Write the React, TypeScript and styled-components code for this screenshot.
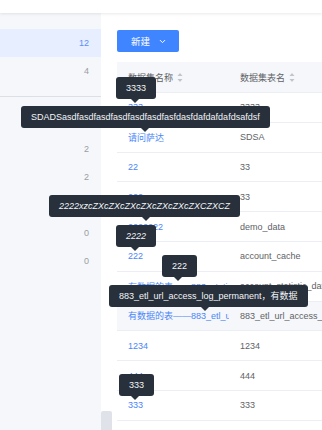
import React from "react";
import styled, { createGlobalStyle } from "styled-components";
import { ChevronDown } from "lucide-react";

const GlobalStyle = createGlobalStyle`
  html, body { margin: 0; padding: 0; background: #fff; }
  body {
    width: 322px;
    height: 430px;
    overflow: hidden;
    font-family: "Liberation Sans", "Noto Sans CJK SC", sans-serif;
  }
  * { box-sizing: border-box; }
`;

const Page = styled.div`
  position: relative;
  width: 322px;
  height: 430px;
  overflow: hidden;
  display: flex;
  flex-direction: column;
`;

const TopBar = styled.header`
  flex: none;
  height: 13px;
  background: #fff;
  box-shadow: 0 1px 3px rgba(0, 0, 0, 0.09);
  position: relative;
  z-index: 1;
`;

const Body = styled.div`
  flex: 1;
  display: flex;
  min-height: 0;
`;

const Sidebar = styled.aside`
  flex: none;
  width: 101px;
  background: #f5f7fa;
  padding-top: 16px;
  display: flex;
  flex-direction: column;
`;

const SideItem = styled.div<{ $active?: boolean }>`
  height: 28px;
  display: flex;
  align-items: center;
  justify-content: flex-end;
  padding-right: 12px;
  font-size: 9px;
  color: ${(p) => (p.$active ? "#5d8df5" : "#9a9ca3")};
  background: ${(p) => (p.$active ? "#e6eeff" : "transparent")};
`;

const SideDivider = styled.div`
  height: 1px;
  background: #dcdfe6;
  margin: 11px 0 10px;
`;

const Main = styled.main`
  flex: 1;
  min-width: 0;
  padding: 17px 0 0 16px;
  display: flex;
  flex-direction: column;
  gap: 10px;
  background: #fff;
`;

const NewButton = styled.button`
  align-self: flex-start;
  width: 62px;
  height: 22px;
  border: none;
  border-radius: 2px;
  background: #3f85ff;
  color: #fff;
  font-family: inherit;
  font-size: 9.5px;
  display: inline-flex;
  align-items: center;
  gap: 8px;
  padding: 0 0 0 14px;
`;

const Table = styled.div`
  display: grid;
  grid-template-columns: 112px 170px;
  width: 282px;
`;

const HeadCell = styled.div`
  height: 31px;
  background: #f5f7fa;
  border-bottom: 1px solid #ebeef5;
  display: flex;
  align-items: center;
  gap: 4px;
  padding-left: 11px;
  font-size: 9px;
  color: #606266;
  white-space: nowrap;
`;

const Cell = styled.div<{ $link?: boolean; $hover?: boolean }>`
  height: 29.8px;
  border-bottom: 1px solid #ebeef5;
  display: flex;
  align-items: center;
  padding-left: 11px;
  font-size: 9px;
  white-space: nowrap;
  overflow: hidden;
  color: ${(p) => (p.$link ? "#4a86f7" : "#606266")};
  background: ${(p) => (p.$hover ? "#f5f7fa" : "#fff")};
`;

const Tip = styled.div<{ $x: number; $y: number; $arrow: number; $italic?: boolean }>`
  position: absolute;
  left: ${(p) => p.$x}px;
  top: ${(p) => p.$y}px;
  height: 22px;
  line-height: 22px;
  padding: 0 10px;
  background: #27303b;
  color: #f3f5f8;
  font-size: 9px;
  font-style: ${(p) => (p.$italic ? "italic" : "normal")};
  border-radius: 3px;
  white-space: nowrap;
  z-index: 5;
  &::after {
    content: "";
    position: absolute;
    left: ${(p) => p.$arrow - 4.5}px;
    top: 100%;
    border-left: 4.5px solid transparent;
    border-right: 4.5px solid transparent;
    border-top: 4.5px solid #27303b;
  }
`;

const Handle = styled.div`
  position: absolute;
  left: 101px;
  top: 411px;
  width: 11px;
  height: 22px;
  background: #dfe2e8;
  border-radius: 2px 2px 0 0;
`;

const SortIcon = () => (
  <svg width="6" height="11" viewBox="0 0 6 11">
    <path d="M3 1 L5.5 4 L0.5 4 Z" fill="#c0c4cc" />
    <path d="M0.5 7 L5.5 7 L3 10 Z" fill="#c0c4cc" />
  </svg>
);

const sideTop = [
  { n: "12", active: true },
  { n: "4" },
];
const sideBottom = ["2", "2", "2", "1", "0", "0"];

const rows: { a: string; b: string; hover?: boolean }[] = [
  { a: "333", b: "3333" },
  { a: "请问萨达", b: "SDSA" },
  { a: "22", b: "33" },
  { a: "222", b: "33" },
  { a: "2222222", b: "demo_data" },
  { a: "222", b: "account_cache" },
  { a: "有数据的表——883_statistic", b: "account_statistic_data" },
  { a: "有数据的表——883_etl_url", b: "883_etl_url_access_log_permanent", hover: true },
  { a: "1234", b: "1234" },
  { a: "444", b: "444" },
  { a: "333", b: "333" },
];

const tips = [
  { t: "3333", x: 116, y: 77, a: 19.5 },
  { t: "SDADSasdfasdfasdfasdfasdfasdfasfdasfdafdafdafdsafdsf", x: 21, y: 106, a: 124 },
  { t: "2222xzcZXcZXcZXcZXcZXcZXcZXCZXCZ", x: 49, y: 195, a: 97.5, i: true },
  { t: "2222", x: 116, y: 225, a: 19.5, i: true },
  { t: "222", x: 162, y: 255, a: 16.5 },
  { t: "883_etl_url_access_log_permanent，有数据", x: 109, y: 285, a: 96 },
  { t: "333", x: 119, y: 374, a: 16.5 },
];

export default function App() {
  return (
    <Page>
      <GlobalStyle />
      <TopBar />
      <Body>
        <Sidebar>
          {sideTop.map((s, i) => (
            <SideItem key={i} $active={s.active}>
              {s.n}
            </SideItem>
          ))}
          <SideDivider />
          {sideBottom.map((n, i) => (
            <SideItem key={i}>{n}</SideItem>
          ))}
        </Sidebar>
        <Main>
          <NewButton>
            新建
            <ChevronDown size={9} strokeWidth={2.6} />
          </NewButton>
          <Table>
            <HeadCell>
              数据集名称
              <SortIcon />
            </HeadCell>
            <HeadCell>
              数据集表名
              <SortIcon />
            </HeadCell>
            {rows.map((r, i) => (
              <React.Fragment key={i}>
                <Cell $link $hover={r.hover}>
                  {r.a}
                </Cell>
                <Cell $hover={r.hover}>{r.b}</Cell>
              </React.Fragment>
            ))}
          </Table>
        </Main>
      </Body>
      {tips.map((t, i) => (
        <Tip key={i} $x={t.x} $y={t.y} $arrow={t.a} $italic={t.i}>
          {t.t}
        </Tip>
      ))}
      <Handle />
    </Page>
  );
}
